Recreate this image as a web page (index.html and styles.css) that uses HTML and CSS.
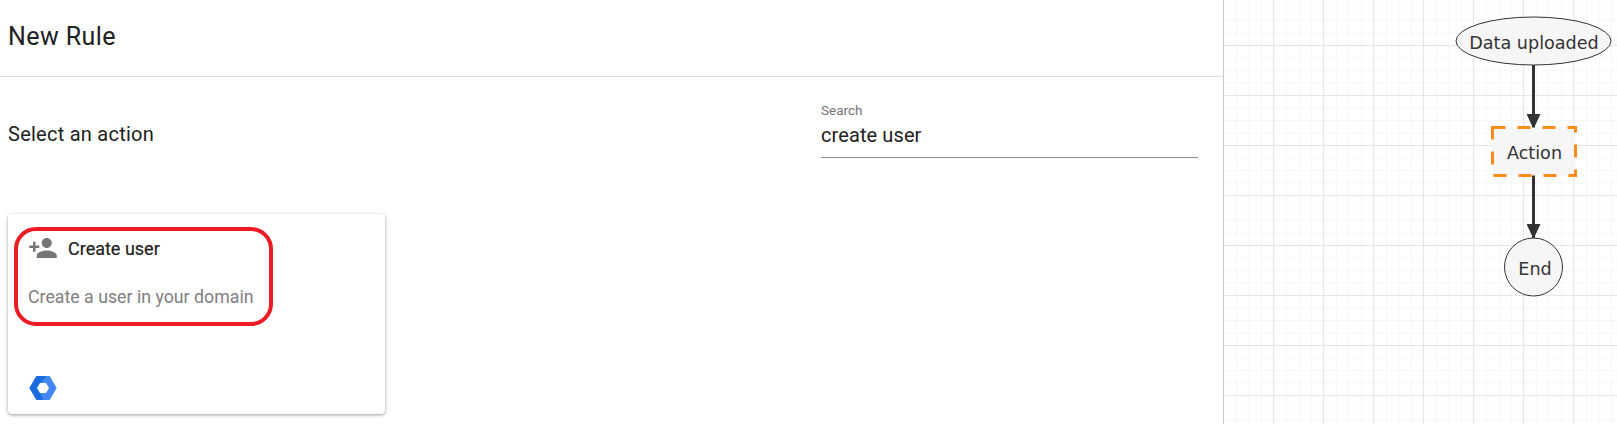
FILE: index.html
```html
<!DOCTYPE html>
<html lang="en">
<head>
    <meta charset="UTF-8">
    <meta name="viewport" content="width=device-width, initial-scale=1.0">
    <title>New Rule</title>
    <link rel="stylesheet" href="styles.css">
</head>
<body>
    <div class="layout">
        <main class="editor">
            <header class="editor-header">
                <h1>New Rule</h1>
            </header>

            <section class="toolbar">
                <h2>Select an action</h2>
                <div class="search">
                    <label for="search">Search</label>
                    <input type="text" id="search" value="create user">
                </div>
            </section>

            <!-- Action card -->
            <div class="cards">
                <article class="card">
                    <div class="card-title">
                        <svg class="card-icon" viewBox="0 0 24 24" width="30" height="30">
                            <path fill="#757575" d="M15 12c2.21 0 4-1.79 4-4s-1.79-4-4-4-4 1.79-4 4 1.79 4 4 4zm-9-2V7H4v3H1v2h3v3h2v-3h3v-2H6zm9 4c-2.67 0-8 1.34-8 4v2h16v-2c0-2.66-5.33-4-8-4z"/>
                        </svg>
                        <span>Create user</span>
                    </div>
                    <p class="card-text">Create a user in your domain</p>
                    <svg class="card-logo" viewBox="0 0 28 26" width="28" height="26">
                        <path fill="#4285f4" stroke="#4285f4" stroke-width="2" stroke-linejoin="round" d="M8 2h12L26.500 13 20 24H8L1.500 13z"/>
                        <path fill="#1a6dde" d="M7.500 1h9.500L11 9 8.500 13l6 12H7.500L.5 13z"/>
                        <path fill="#fff" d="M11 8h6l3 5-3 5h-6l-3-5z"/>
                    </svg>
                    <div class="highlight"></div>
                </article>
            </div>
        </main>

        <!-- Rule diagram -->
        <aside class="diagram">
            <svg class="flow" viewBox="0 0 393 424" width="393" height="424">
                <defs>
                    <marker id="arrow" markerWidth="15" markerHeight="14" refX="14" refY="7" orient="auto" markerUnits="userSpaceOnUse">
                        <path d="M0 0L15 7L0 14z" fill="#333"/>
                    </marker>
                </defs>
                <line class="edge" x1="309.500" y1="65" x2="309.500" y2="128" marker-end="url(#arrow)"/>
                <line class="edge" x1="309.500" y1="175" x2="309.500" y2="238" marker-end="url(#arrow)"/>
                <ellipse class="node" cx="309.500" cy="41" rx="77.500" ry="24"/>
                <text class="label" x="310" y="49" text-anchor="middle">Data uploaded</text>
                <rect class="node-action" x="268.500" y="127.500" width="83" height="48"/>
                <text class="label" x="310.500" y="159" text-anchor="middle">Action</text>
                <circle class="node" cx="309.500" cy="267" r="29"/>
                <text class="label" x="311" y="275" text-anchor="middle">End</text>
            </svg>
        </aside>
    </div>
</body>
</html>
```

FILE: styles.css
```css
* {
    box-sizing: border-box;
}

html, body {
    height: 100%;
}

body {
    margin: 0;
    overflow: hidden;
    font-family: Roboto, sans-serif;
    background-color: #fff;
    color: #212121;
}

.layout {
    display: flex;
    height: 424px;
}

.editor {
    width: 1223px;
    flex-shrink: 0;
}

.editor-header {
    height: 77px;
    padding: 0 8px 4px;
    display: flex;
    align-items: center;
    border-bottom: 1px solid #e0e0e0;
}

h1 {
    margin: 0;
    font-size: 25px;
    font-weight: 400;
    letter-spacing: 0.4px;
}

.toolbar {
    display: flex;
    justify-content: space-between;
    align-items: flex-start;
    padding: 25px 25px 0 8px;
    height: 137px;
}

h2 {
    margin: 20px 0 0;
    font-size: 20px;
    font-weight: 400;
    letter-spacing: 0.25px;
}

.search {
    width: 377px;
    display: flex;
    flex-direction: column;
    border-bottom: 1px solid #8c8c8c;
    height: 56px;
}

.search label {
    font-size: 13.500px;
    line-height: 16px;
    color: #757575;
}

.search input {
    border: none;
    outline: none;
    padding: 0;
    margin-top: 5px;
    font-family: inherit;
    font-size: 20px;
    letter-spacing: 0.1px;
    color: #212121;
    background: transparent;
}

.cards {
    padding: 0 8px;
}

.card {
    position: relative;
    width: 377px;
    height: 200px;
    padding: 19px 20px 13px;
    display: flex;
    flex-direction: column;
    background-color: #fff;
    border-radius: 4px;
    box-shadow: 0 1px 3px rgba(0, 0, 0, 0.3), 0 1px 5px rgba(0, 0, 0, 0.12);
}

.card-title {
    display: flex;
    align-items: center;
    gap: 10px;
    height: 30px;
    font-size: 18px;
    font-weight: 400;
    -webkit-text-stroke: 0.2px #212121;
}

.card-text {
    margin: 24px 0 0;
    font-size: 17.750px;
    color: #808080;
}

.card-logo {
    margin-top: auto;
    margin-left: 1px;
}

.highlight {
    position: absolute;
    left: 6px;
    top: 13px;
    width: 259px;
    height: 99px;
    border: 4.500px solid #ed1c24;
    border-radius: 22px;
}

.diagram {
    flex: 1;
    position: relative;
    border-left: 1px solid #c8c8c8;
    background-color: #fff;
    background-image:
        linear-gradient(#e6e6e6 1px, transparent 1px),
        linear-gradient(90deg, #e6e6e6 1px, transparent 1px),
        linear-gradient(#f7f7f7 1px, transparent 1px),
        linear-gradient(90deg, #f7f7f7 1px, transparent 1px);
    background-size: 50px 50px, 50px 50px, 12.500px 12.500px, 12.500px 12.500px;
    background-position: 0 45px, 49px 0, 0 7.500px, 12px 0;
}

.flow {
    display: block;
}

.edge {
    stroke: #333;
    stroke-width: 3;
}

.node {
    fill: #f6f6f6;
    stroke: #333;
    stroke-width: 1;
}

.node-action {
    fill: #f6f6f6;
    stroke: #ff8c1a;
    stroke-width: 3;
    stroke-dasharray: 13 12;
}

.label {
    font-family: "DejaVu Sans", sans-serif;
    font-size: 17.600px;
    fill: #333;
}
```
